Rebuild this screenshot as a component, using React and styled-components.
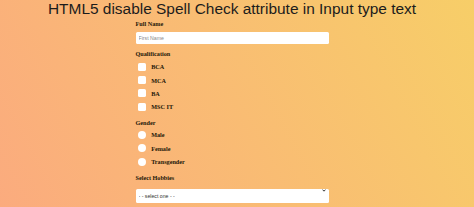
import React from 'react'
import styled, { createGlobalStyle } from 'styled-components'

const GlobalStyle = createGlobalStyle`
    html, body {
        margin: 0;
        padding: 0;
    }
    body {
        width: 474px;
        height: 207px;
        overflow: hidden;
        background-image: linear-gradient(62deg, #FBAB7E 0%, #F7CE68 100%);
        font-family: "Liberation Serif", "Times New Roman", serif;
    }
`

const Page = styled.div`
    width: 464px;
    height: 207px;
    display: flex;
    flex-direction: column;
    align-items: center;
`

const Title = styled.h1`
    margin: 0;
    padding-top: 0.4px;
    font-family: "Liberation Sans", Arial, sans-serif;
    font-weight: 400;
    font-size: 15.45px;
    line-height: 17.8px;
    color: #1c1c1c;
    white-space: nowrap;
`

const Form = styled.form`
    width: 193px;
    display: flex;
    flex-direction: column;
    margin-top: 2.3px;
`

const Label = styled.div`
    font-weight: 700;
    font-size: 6.2px;
    line-height: 8px;
    height: 8px;
    color: #241708;
    margin-top: ${p => p.$top || 0}px;
`

const TextInput = styled.input`
    box-sizing: border-box;
    width: 193px;
    height: 12.6px;
    margin-top: 3.4px;
    padding: 0 3px;
    border: none;
    border-radius: 1.5px;
    background: #fff;
    font-family: "Liberation Sans", Arial, sans-serif;
    font-size: 5.2px;
    outline: none;
    &::placeholder {
        color: #8a8a8a;
    }
`

const Options = styled.div`
    display: flex;
    flex-direction: column;
    margin-top: ${p => p.$top || 0}px;
`

const OptionRow = styled.label`
    display: flex;
    align-items: center;
    height: 13.3px;
    padding-left: 2.7px;
    font-weight: 700;
    font-size: 6.2px;
    color: #241708;
`

const Box = styled.input`
    appearance: none;
    margin: 0 5px 0 0;
    width: 8px;
    height: 8px;
    background: #fff;
    border: none;
    border-radius: ${p => (p.type === 'radio' ? '50%' : '1.6px')};
`

const SelectWrap = styled.div`
    position: relative;
    margin-top: 2.3px;
`

const Select = styled.select`
    appearance: none;
    box-sizing: border-box;
    width: 193px;
    height: 14px;
    padding: 0 3px;
    border: none;
    border-radius: 1.5px;
    background: #fff;
    font-family: "Liberation Sans", Arial, sans-serif;
    font-size: 5.2px;
    color: #333;
    outline: none;
`

const Chevron = styled.svg`
    position: absolute;
    right: 3px;
    top: 5.5px;
    width: 4px;
    height: 3px;
    pointer-events: none;
`

const qualifications = ['BCA', 'MCA', 'BA', 'MSC IT']
const genders = ['Male', 'Female', 'Transgender']

const App = () => {
    return (
        <Page>
            <GlobalStyle />
            <Title>HTML5 disable Spell Check attribute in Input type text</Title>
            <Form>
                <Label>Full Name</Label>
                <TextInput type="text" spellCheck="false" placeholder="First Name" />

                <Label $top={5.4}>Qualification</Label>
                <Options $top={2.3}>
                    {qualifications.map(q => (
                        <OptionRow key={q}>
                            <Box type="checkbox" />
                            {q}
                        </OptionRow>
                    ))}
                </Options>

                <Label $top={5.4}>Gender</Label>
                <Options $top={1.6}>
                    {genders.map(g => (
                        <OptionRow key={g}>
                            <Box type="radio" name="gender" />
                            {g}
                        </OptionRow>
                    ))}
                </Options>

                <Label $top={5.4}>Select Hobbies</Label>
                <SelectWrap>
                    <Select defaultValue="">
                        <option value="">- - select one - -</option>
                    </Select>
                    <Chevron viewBox="0 0 8 6">
                        <path d="M1 1.2 L4 4.4 L7 1.2" fill="none" stroke="#222" strokeWidth="1.8" />
                    </Chevron>
                </SelectWrap>
            </Form>
        </Page>
    )
}

export default App
